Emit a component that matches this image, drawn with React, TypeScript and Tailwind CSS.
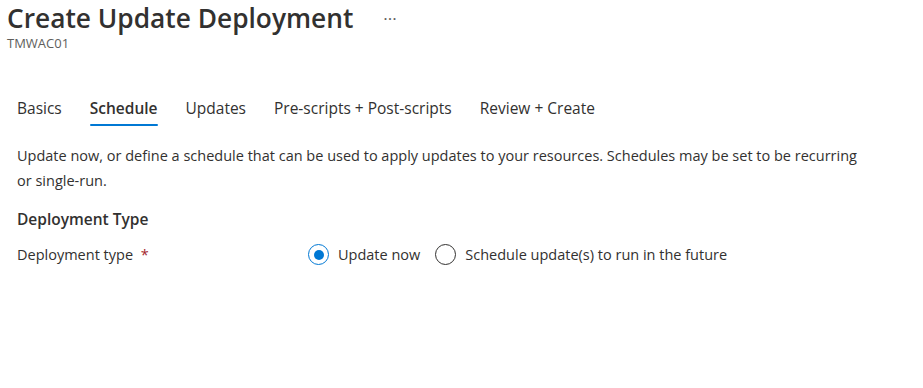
import { useState } from 'react';

const tabs = ['Basics', 'Schedule', 'Updates', 'Pre-scripts + Post-scripts', 'Review + Create'];

export default function App() {
  const [active, setActive] = useState('Schedule');
  const [mode, setMode] = useState<'now' | 'future'>('now');

  return (
    <div className="w-[923px] h-[388px] bg-white text-[#323130] overflow-hidden" style={{ fontFamily: '"Segoe UI", "Open Sans", sans-serif' }}>
      <div className="pl-[7px] pt-[2px]">
        <div className="flex items-center h-[32px]">
          <h1 className="text-[26.3px] font-semibold leading-[32px] whitespace-nowrap">Create Update Deployment</h1>
          <span className="ml-[30px] text-[17px] text-[#605e5c] leading-none">···</span>
        </div>
        <div className="text-[13px] leading-[16px] text-[#605e5c] mt-[1px]">TMWAC01</div>
      </div>

      <div className="pl-[17px] mt-[47px] flex gap-[28px] text-[15.5px]">
        {tabs.map((t) => (
          <button
            key={t}
            onClick={() => setActive(t)}
            className={`relative pb-[8px] leading-[20px] ${active === t ? 'font-semibold' : ''}`}
          >
            {t}
            {active === t && <span className="absolute left-0 right-0 bottom-0 h-[2px] bg-[#0078d4] rounded" />}
          </button>
        ))}
      </div>

      <div className="pl-[17px] w-[870px] mt-[17px] text-[14.5px] leading-[25px]">
        Update now, or define a schedule that can be used to apply updates to your resources. Schedules may be set to be recurring or single-run.
      </div>

      <div className="pl-[17px] mt-[16px] text-[15.5px] font-semibold leading-[20px]">Deployment Type</div>

      <div className="pl-[17px] mt-[15px] flex items-center text-[14.5px] leading-[20px]">
        <div className="w-[291px]">
          Deployment type <span className="text-[#a4262c] ml-[4px]">*</span>
        </div>
        <label className="flex items-center gap-[9px] cursor-pointer" onClick={() => setMode('now')}>
          <span className={`w-[21px] h-[21px] rounded-full border flex items-center justify-center ${mode === 'now' ? 'border-[#0078d4]' : 'border-[#323130]'}`}>
            {mode === 'now' && <span className="w-[10px] h-[10px] rounded-full bg-[#0078d4]" />}
          </span>
          Update now
        </label>
        <label className="flex items-center gap-[9px] ml-[15px] cursor-pointer" onClick={() => setMode('future')}>
          <span className={`w-[21px] h-[21px] rounded-full border flex items-center justify-center ${mode === 'future' ? 'border-[#0078d4]' : 'border-[#323130]'}`}>
            {mode === 'future' && <span className="w-[10px] h-[10px] rounded-full bg-[#0078d4]" />}
          </span>
          Schedule update(s) to run in the future
        </label>
      </div>
    </div>
  );
}
